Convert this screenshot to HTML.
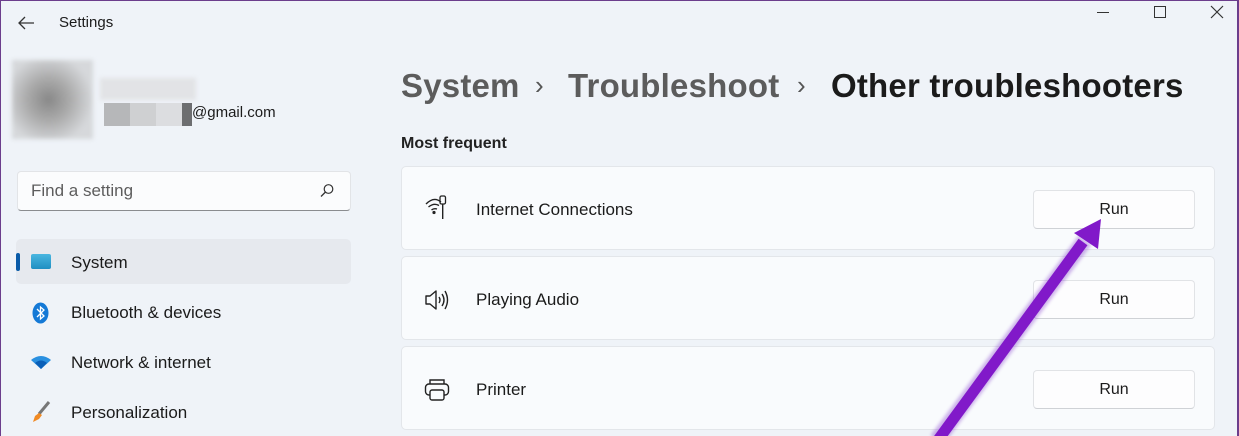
<!DOCTYPE html>
<html><head><style>
*{margin:0;padding:0;box-sizing:border-box}
body{width:1239px;height:436px;overflow:hidden;background:#eff3f8;font-family:"Liberation Sans",sans-serif;color:#1b1b1b;position:relative}
.frame{position:absolute;left:0;top:0;width:1239px;height:436px;border:1px solid #6b3d8c;border-right:2px solid #6b3d8c;border-bottom:none}
.abs{position:absolute;white-space:nowrap}
.card{position:absolute;left:401px;width:814px;height:84px;background:#f9fbfd;border:1px solid #e3e6ea;border-radius:5px}
.card .lbl{position:absolute;left:74px;top:33px;font-size:17px}
.btn{position:absolute;left:631px;top:23px;width:162px;height:39px;background:#fdfdfe;border:1px solid #e1e3e6;border-bottom-color:#cfd2d6;border-radius:4px;font-size:16px;text-align:center;line-height:37px}
.ico{position:absolute;left:22px;top:28px}
.nav{position:absolute;left:71px;font-size:17px}
.t{position:absolute;white-space:nowrap;top:67px;font-size:33px;font-weight:bold;letter-spacing:0.2px}
</style></head><body>
<svg class="abs" style="left:17px;top:15px" width="18" height="16"><path d="M17 8H2M8 2L2 8l6 6" stroke="#333" stroke-width="1.3" fill="none"/></svg>
<div class="abs" style="left:59px;top:14px;font-size:15px">Settings</div>
<div class="abs" style="left:1097px;top:12px;width:12px;height:1px;background:#333"></div>
<div class="abs" style="left:1154px;top:6px;width:12px;height:12px;border:1.2px solid #333"></div>
<svg class="abs" style="left:1210px;top:5px" width="14" height="14"><path d="M1 1l12 12M13 1L1 13" stroke="#333" stroke-width="1.2"/></svg>
<div class="abs" style="left:12px;top:60px;width:81px;height:79px;background:radial-gradient(circle at 45% 50%,#888 0,#aaa 35%,#d6d8db 75%);filter:blur(2px)"></div>
<div class="abs" style="left:100px;top:78px;width:96px;height:22px;background:#e2e3e6;filter:blur(2px)"></div>
<div class="abs" style="left:104px;top:103px;width:26px;height:23px;background:#b6b7b9"></div>
<div class="abs" style="left:130px;top:103px;width:26px;height:23px;background:#cfd0d2"></div>
<div class="abs" style="left:156px;top:103px;width:26px;height:23px;background:#dcdde0"></div>
<div class="abs" style="left:182px;top:103px;width:10px;height:23px;background:#6d6e70"></div>
<div class="abs" style="left:192px;top:104px;font-size:15px">@gmail.com</div>
<div class="abs" style="left:17px;top:171px;width:334px;height:40px;background:#fbfcfd;border:1px solid #e2e4e7;border-bottom:1px solid #8a8c8f;border-radius:4px"></div>
<div class="abs" style="left:31px;top:181px;font-size:17px;color:#5d5d5d">Find a setting</div>
<svg class="abs" style="left:319px;top:183px" width="16" height="16"><circle cx="9.5" cy="6" r="4.3" stroke="#333" stroke-width="1.2" fill="none"/><path d="M6.5 9L2 13.5" stroke="#333" stroke-width="1.3"/></svg>
<div class="abs" style="left:16px;top:239px;width:335px;height:45px;background:#e6e9ee;border-radius:5px"></div>
<div class="abs" style="left:16px;top:253px;width:4px;height:18px;background:#0a5ba8;border-radius:2px"></div>
<div class="abs" style="left:31px;top:254px;width:20px;height:15px;background:linear-gradient(#49b6e0,#1f8fc2);border-radius:2px"></div>
<div class="nav" style="top:253px">System</div>
<svg class="abs" style="left:32px;top:302px" width="17" height="22"><ellipse cx="8.5" cy="11" rx="8" ry="10.5" fill="#1479d6"/><path d="M5 7l7 7-3.5 3V5L12 8l-7 7" stroke="#fff" stroke-width="1.3" fill="none"/></svg>
<div class="nav" style="top:303px">Bluetooth &amp; devices</div>
<svg class="abs" style="left:31px;top:355px" width="20" height="14"><path d="M0 5Q10-3 20 5L10 14z" fill="#2a90e0"/><path d="M4 8Q10 3 16 8L10 14z" fill="#0a5fb8"/></svg>
<div class="nav" style="top:353px">Network &amp; internet</div>
<svg class="abs" style="left:31px;top:401px" width="20" height="22"><path d="M18 1L8 13" stroke="#777" stroke-width="3"/><path d="M8 12l-4 3-2 6 6-3 3-4z" fill="#f08a24"/></svg>
<div class="nav" style="top:403px">Personalization</div>

<div class="t" style="left:401px;color:#5c5c5c">System</div>
<div class="abs" style="left:535px;top:70px;font-size:26px;color:#555">›</div>
<div class="t" style="left:568px;color:#5c5c5c">Troubleshoot</div>
<div class="abs" style="left:797px;top:70px;font-size:26px;color:#555">›</div>
<div class="t" style="left:831px;color:#1b1b1b">Other troubleshooters</div>
<div class="abs" style="left:401px;top:135px;font-size:16px;font-weight:bold;color:#222">Most frequent</div>

<div class="card" style="top:166px">
<svg class="ico" width="26" height="28" style="top:27px"><path d="M2 10Q10 2 17 8M4.5 13Q10 8.5 15 11.5M7.5 16Q10 14 13 15" stroke="#222" stroke-width="1.4" fill="none"/><circle cx="10" cy="18.5" r="1.6" fill="#222"/><rect x="16" y="2" width="5.5" height="8" rx="1.5" stroke="#222" stroke-width="1.3" fill="none"/><path d="M18.7 10v15" stroke="#222" stroke-width="1.4"/></svg>
<div class="lbl">Internet Connections</div><div class="btn">Run</div></div>
<div class="card" style="top:256px">
<svg class="ico" width="28" height="24" style="top:31px"><path d="M2 8h4l6-5v18l-6-5H2z" stroke="#222" stroke-width="1.4" fill="none" stroke-linejoin="round"/><path d="M15 9q2 3 0 6M18 6q4 6 0 12M21 3q5 9 0 18" stroke="#222" stroke-width="1.4" fill="none"/></svg>
<div class="lbl">Playing Audio</div><div class="btn">Run</div></div>
<div class="card" style="top:346px">
<svg class="ico" width="28" height="26" style="top:30px"><path d="M6 7V3h14v4" stroke="#222" stroke-width="1.4" fill="none"/><rect x="1.5" y="7" width="23" height="11" rx="3.5" stroke="#222" stroke-width="1.4" fill="none"/><rect x="6" y="13" width="14" height="10" rx="2" stroke="#222" stroke-width="1.4" fill="#f9fbfd"/></svg>
<div class="lbl">Printer</div><div class="btn">Run</div></div>

<svg class="abs" style="left:0;top:0" width="1239" height="436"><defs><filter id="g"><feGaussianBlur stdDeviation="1.5"/></filter></defs>
<g filter="url(#g)" opacity=".35"><path d="M937 440L1085 240" stroke="#7a2fc8" stroke-width="16"/></g>
<path d="M938 440L1083 242" stroke="#8119c9" stroke-width="11"/>
<path d="M1101 219L1074 233L1098 249Z" fill="#8119c9"/></svg>
<div class="frame"></div>
</body></html>
